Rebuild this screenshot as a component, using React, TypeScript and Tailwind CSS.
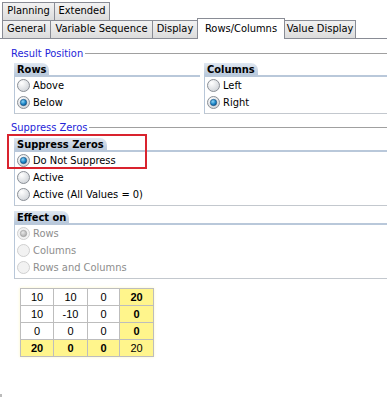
import React from "react";

const font = { fontFamily: '"DejaVu Sans Condensed", "Liberation Sans", Arial, sans-serif' };

function Radio({ checked, disabled }: { checked?: boolean; disabled?: boolean }) {
  return (
    <svg width="13" height="13" viewBox="0 0 13 13" className="shrink-0">
      <defs>
        <radialGradient id="rg" cx="0.35" cy="0.3" r="0.8">
          <stop offset="0" stopColor="#ffffff" />
          <stop offset="1" stopColor="#cdd1d6" />
        </radialGradient>
        <radialGradient id="dot" cx="0.4" cy="0.35" r="0.7">
          <stop offset="0" stopColor="#8fd3f5" />
          <stop offset="0.6" stopColor="#1a86c8" />
          <stop offset="1" stopColor="#0d4f8a" />
        </radialGradient>
        <radialGradient id="dotd" cx="0.4" cy="0.35" r="0.7">
          <stop offset="0" stopColor="#e8e8e8" />
          <stop offset="1" stopColor="#a8a8a8" />
        </radialGradient>
      </defs>
      <circle cx="6.5" cy="6.5" r="6" fill={disabled ? "#f2f2f2" : "url(#rg)"} stroke={disabled ? "#cfcfcf" : "#8a8f96"} strokeWidth="1" />
      {checked && <circle cx="6.5" cy="6.5" r="3.2" fill={disabled ? "url(#dotd)" : "url(#dot)"} stroke={disabled ? "#9a9a9a" : "#1f4f7a"} strokeWidth="0.6" />}
    </svg>
  );
}

function RadioRow({ label, checked, disabled }: { label: string; checked?: boolean; disabled?: boolean }) {
  return (
    <div className="flex items-center h-[17px] pl-[2px] gap-[3px]">
      <Radio checked={checked} disabled={disabled} />
      <span className={`text-[11px] leading-none ${disabled ? "text-[#8d8d8d]" : "text-black"}`}>{label}</span>
    </div>
  );
}

function Group({ title, children, className = "" }: { title: string; children: React.ReactNode; className?: string }) {
  return (
    <div className={`flex flex-col ${className}`}>
      <div className="flex">
        <div className="h-[12px] px-[3px] flex items-center rounded-tr-[7px] bg-gradient-to-b from-[#dfe7f1] to-[#b9c9dc] text-[11px] font-bold leading-none text-black">
          {title}
        </div>
      </div>
      <div className="border-t-2 border-t-[#b9c8da] border-l border-l-[#b8c7d9] border-b border-b-[#c3c8ce] pb-[2px]">
        {children}
      </div>
    </div>
  );
}

function Section({ title }: { title: string }) {
  return (
    <div className="flex items-center h-[14px] pl-[11px]">
      <span className="text-[11px] leading-none text-[#2424d8]">{title}</span>
      <div className="flex-1 ml-[2px] h-px bg-[#a0a0a0]" />
    </div>
  );
}

function Tab({ label, w, active }: { label: string; w: number; active?: boolean }) {
  return (
    <div
      style={{ width: w }}
      className={
        active
          ? "h-[21px] -mt-[2px] bg-white border border-[#898c95] border-b-0 flex items-center justify-center text-[11px] whitespace-nowrap text-black relative z-10 -mb-px -mr-px"
          : "h-[18px] bg-gradient-to-b from-[#f2f2f2] to-[#dcdcdc] border border-[#898c95] border-b-0 flex items-center justify-center text-[11px] whitespace-nowrap text-black -mr-px"
      }
    >
      {label}
    </div>
  );
}

const cell = "border border-[#bdbdbd] h-[17px] text-center text-[11px] leading-none";

export default function App() {
  const rows: [string, boolean, boolean][][] = [
    [["10", false, false], ["10", false, false], ["0", false, false], ["20", true, true]],
    [["10", false, false], ["-10", false, false], ["0", false, false], ["0", true, true]],
    [["0", false, false], ["0", false, false], ["0", false, false], ["0", true, true]],
    [["20", true, true], ["0", true, true], ["0", true, true], ["20", true, false]],
  ];
  return (
    <div style={font} className="w-[387px] h-[399px] bg-white relative overflow-hidden">
      {/* tabs */}
      <div className="pt-[2px] pl-[2px]">
        <div className="flex">
          <Tab label="Planning" w={53} />
          <Tab label="Extended" w={56} />
        </div>
        <div className="flex items-end">
          <Tab label="General" w={49} />
          <Tab label="Variable Sequence" w={103} />
          <Tab label="Display" w={46} />
          <Tab label="Rows/Columns" w={88} active />
          <Tab label="Value Display" w={72} />
        </div>
      </div>
      <div className="h-px bg-[#898c95]" />

      <div className="pt-[7px]">
        <Section title="Result Position" />
        <div className="flex pl-[14px] pt-[3px] gap-[4px]">
          <Group title="Rows" className="w-[186px]">
            <RadioRow label="Above" />
            <RadioRow label="Below" checked />
          </Group>
          <Group title="Columns" className="flex-1">
            <RadioRow label="Left" />
            <RadioRow label="Right" checked />
          </Group>
        </div>

        <div className="pt-[6px]">
          <Section title="Suppress Zeros" />
        </div>
        <div className="pl-[14px] pt-[4px] relative">
          <div className="absolute left-[7px] top-0 w-[140px] h-[35px] border-2 border-[#d9232e] z-10 pointer-events-none" />
          <Group title="Suppress Zeros">
            <RadioRow label="Do Not Suppress" checked />
            <RadioRow label="Active" />
            <RadioRow label="Active (All Values = 0)" />
          </Group>
        </div>

        <div className="pl-[14px] pt-[5px]">
          <Group title="Effect on">
            <RadioRow label="Rows" checked disabled />
            <RadioRow label="Columns" disabled />
            <RadioRow label="Rows and Columns" disabled />
          </Group>
        </div>

        <div className="pl-[20px] pt-[9px]">
          <table className="border-collapse shadow-[0_0_3px_#fbf6c8]" style={{ fontFamily: '"Liberation Sans", Arial, sans-serif' }}>
            <tbody>
              {rows.map((r, i) => (
                <tr key={i}>
                  {r.map(([v, y, b], j) => (
                    <td
                      key={j}
                      className={`${cell} ${j === 1 ? "w-[34px]" : j === 2 ? "w-[32px]" : j === 3 ? "w-[34px]" : "w-[33px]"} ${y ? "bg-[#fff58c]" : "bg-white"} ${b ? "font-bold" : ""}`}
                    >
                      {v}
                    </td>
                  ))}
                </tr>
              ))}
            </tbody>
          </table>
        </div>
      </div>
      <div className="absolute left-0 bottom-[2px] w-[2px] h-[3px] bg-[#bbbbbb]" />
    </div>
  );
}
